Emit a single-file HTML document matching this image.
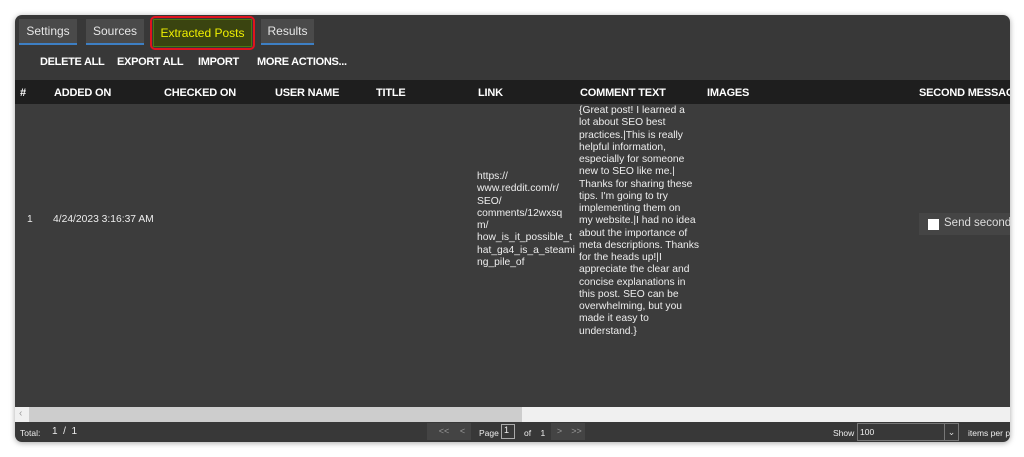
<!DOCTYPE html>
<html><head><meta charset="utf-8"><style>
*{margin:0;padding:0;box-sizing:border-box}
body{width:1024px;height:457px;background:#fff;position:relative;overflow:hidden;font-family:"Liberation Sans",sans-serif}
.win{position:absolute;left:15px;top:15px;width:995px;height:427px;background:#383838;border-radius:7px;overflow:hidden;box-shadow:0 1px 6px rgba(0,0,0,.35)}
.a{position:absolute;white-space:nowrap}
.tab{position:absolute;top:4px;height:26px;background:#4a4a4a;color:#e6e6e6;font-size:12px;text-align:center;line-height:24px;border-bottom:2px solid #3d7fc4}
.tb{color:#fff;font-weight:bold;font-size:11px;top:41px;letter-spacing:-0.3px}
.hd{position:absolute;left:0;top:65px;width:995px;height:24px;background:#1e1e1e}
.h{color:#fff;font-weight:bold;font-size:11px;top:72px;letter-spacing:-0.2px}
.body{position:absolute;left:0;top:89px;width:995px;height:303px;background:#3c3c3c}
.t{color:#eee;font-size:10.3px;line-height:12.25px}
</style></head><body>
<div class="win">
<div class="tab" style="left:4px;width:58px">Settings</div>
<div class="tab" style="left:71px;width:58px">Sources</div>
<div class="tab" style="left:246px;width:53px">Results</div>
<div class="a" style="left:135px;top:1px;width:105px;height:34px;border:2px solid #e0141e;border-radius:5px"></div>
<div class="a" style="left:138px;top:4px;width:99px;height:28px;background:#3a4410;border:1px solid #4a7a10;color:#f0f000;font-size:12px;text-align:center;line-height:27px">Extracted Posts</div>
<div class="a tb" style="left:25px">DELETE ALL</div>
<div class="a tb" style="left:102px">EXPORT ALL</div>
<div class="a tb" style="left:183px">IMPORT</div>
<div class="a tb" style="left:242px">MORE ACTIONS...</div>
<div class="hd"></div>
<div class="a h" style="left:5px">#</div>
<div class="a h" style="left:39px">ADDED ON</div>
<div class="a h" style="left:149px">CHECKED ON</div>
<div class="a h" style="left:260px">USER NAME</div>
<div class="a h" style="left:361px">TITLE</div>
<div class="a h" style="left:463px">LINK</div>
<div class="a h" style="left:565px">COMMENT TEXT</div>
<div class="a h" style="left:692px">IMAGES</div>
<div class="a h" style="left:904px">SECOND MESSAGE</div>
<div class="body"></div>
<div class="a t" style="left:12px;top:199px">1</div>
<div class="a t" style="left:38px;top:199px">4/24/2023 3:16:37 AM</div>
<div class="a t" style="left:462px;top:156px">https://<br>www.reddit.com/r/<br>SEO/<br>comments/12wxsq<br>m/<br>how_is_it_possible_t<br>hat_ga4_is_a_steami<br>ng_pile_of</div>
<div class="a t" style="left:564px;top:90px">{Great post! I learned a<br>lot about SEO best<br>practices.|This is really<br>helpful information,<br>especially for someone<br>new to SEO like me.|<br>Thanks for sharing these<br>tips. I'm going to try<br>implementing them on<br>my website.|I had no idea<br>about the importance of<br>meta descriptions. Thanks<br>for the heads up!|I<br>appreciate the clear and<br>concise explanations in<br>this post. SEO can be<br>overwhelming, but you<br>made it easy to<br>understand.}</div>
<div class="a" style="left:904px;top:198px;width:100px;height:22px;background:#454545"></div>
<div class="a" style="left:913px;top:204px;width:11px;height:11px;background:#fff"></div>
<div class="a" style="left:929px;top:202px;color:#ddd;font-size:11.5px">Send seconda</div>
<div class="a" style="left:0;top:392px;width:995px;height:15px;background:#f0f0f0"></div>
<div class="a" style="left:14px;top:392px;width:493px;height:15px;background:#cdcdcd"></div>
<div class="a" style="left:4px;top:393px;color:#999;font-size:10px">&lsaquo;</div>
<div class="a" style="left:5px;top:413px;color:#eee;font-size:8.5px">Total:</div>
<div class="a" style="left:37px;top:411px;color:#eee;font-size:10px">1 &nbsp;/ &nbsp;1</div>
<div class="a" style="left:412px;top:408px;width:34px;height:17px;background:#444;color:#999;font-size:9px;text-align:center;line-height:17px">&lt;&lt;</div>
<div class="a" style="left:439px;top:408px;width:17px;height:17px;background:#444;color:#999;font-size:9px;text-align:center;line-height:17px">&lt;</div>
<div class="a" style="left:464px;top:413px;color:#eee;font-size:8.5px">Page</div>
<div class="a" style="left:486px;top:409px;width:14px;height:15px;border:1px solid #aaa;color:#eee;font-size:9px;padding-left:2px">1</div>
<div class="a" style="left:509px;top:413px;color:#eee;font-size:8.5px">of &nbsp;&nbsp;&nbsp;1</div>
<div class="a" style="left:536px;top:408px;width:17px;height:17px;background:#444;color:#999;font-size:9px;text-align:center;line-height:17px">&gt;</div>
<div class="a" style="left:553px;top:408px;width:17px;height:17px;background:#444;color:#999;font-size:9px;text-align:center;line-height:17px">&gt;&gt;</div>
<div class="a" style="left:818px;top:413px;color:#eee;font-size:8.5px">Show</div>
<div class="a" style="left:842px;top:408px;width:102px;height:18px;border:1px solid #777;color:#eee;font-size:8.5px;padding:3px 2px">100</div>
<div class="a" style="left:929px;top:408px;width:15px;height:18px;border:1px solid #777;color:#ddd;font-size:9px;text-align:center;line-height:16px">&#8964;</div>
<div class="a" style="left:953px;top:413px;color:#eee;font-size:8.5px">items per page</div>
</div>
</body></html>
